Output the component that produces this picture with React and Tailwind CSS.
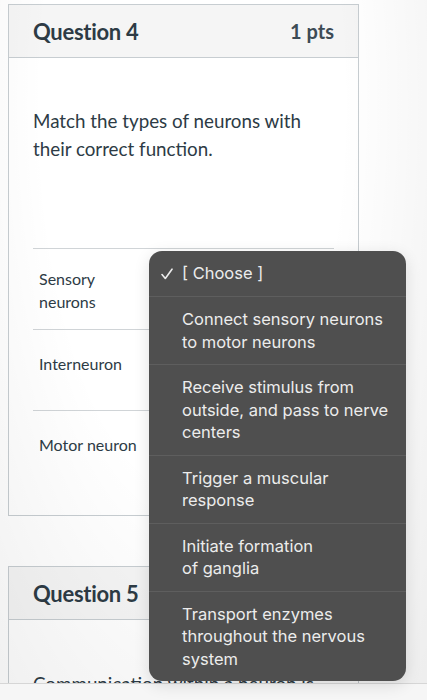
import React from "react";

const options = [
  ["Connect sensory neurons", "to motor neurons"],
  ["Receive stimulus from", "outside, and pass to nerve", "centers"],
  ["Trigger a muscular", "response"],
  ["Initiate formation", "of ganglia"],
  ["Transport enzymes", "throughout the nervous", "system"],
];

export default function App() {
  return (
    <div className="relative w-[427px] h-[700px] overflow-hidden bg-white font-['Lato','Liberation_Sans',sans-serif] text-[#2d3b45]">
      <div className="pt-[4px] pl-[8px]">
        {/* Card 1 */}
        <div className="w-[351px] border border-[#c7cdd1] bg-white">
          <div className="h-[53px] bg-[#f5f5f5] border-b border-[#c7cdd1] flex items-center justify-between pl-[24px] pr-[24px]">
            <span className="text-[22px] font-bold tracking-[-0.3px]">Question 4</span>
            <span className="text-[20px] font-bold text-[#3d4b55]">1 pts</span>
          </div>
          <div className="pl-[24px] pr-[24px] pt-[49px]">
            <p className="text-[18.8px] leading-[28px] text-[#2d3b45]">
              Match the types of neurons with
              <br />
              their correct function.
            </p>
            <div className="mt-[85px] border-t border-[#d0d4d7]">
              <div className="h-[81px] border-b border-[#d0d4d7] pt-[18px] pl-[6px]">
                <div className="w-[100px] text-[16px] leading-[23px]">Sensory neurons</div>
              </div>
              <div className="h-[81px] border-b border-[#d0d4d7] pt-[22px] pl-[6px]">
                <div className="text-[16px] leading-[23px]">Interneuron</div>
              </div>
              <div className="h-[104px] pt-[22px] pl-[6px]">
                <div className="text-[16px] leading-[23px]">Motor neuron</div>
              </div>
            </div>
          </div>
        </div>

        {/* Card 2 */}
        <div className="mt-[50px] w-[351px] border border-[#c7cdd1] bg-white">
          <div className="h-[53px] bg-[#f5f5f5] border-b border-[#c7cdd1] flex items-center pl-[24px]">
            <span className="text-[22px] font-bold tracking-[-0.3px]">Question 5</span>
          </div>
          <div className="pl-[24px] pt-[50px]">
            <p className="text-[18.8px] leading-[28px]">Communication within a neuron is</p>
          </div>
        </div>
      </div>

      {/* dim overlay */}
      <div className="pointer-events-none absolute inset-0 bg-[radial-gradient(ellipse_at_45%_15%,rgba(255,255,255,0)_45%,rgba(0,0,0,0.07)_100%)]" />

      {/* bottom bar */}
      <div className="absolute left-0 right-0 bottom-0 h-[17px] bg-[#f6f6f6] border-t border-[#d6d6d6]" />

      {/* dropdown */}
      <div className="absolute left-[149px] top-[251px] w-[257px] rounded-[13px] bg-[#4f4f4f] overflow-hidden font-['Inter','Liberation_Sans',sans-serif] text-[16.5px] leading-[22.5px] text-[#ececec] shadow-[0_4px_16px_rgba(0,0,0,0.12)]">
        <div className="h-[45px] flex items-center">
          <span className="w-[33px] pl-[12px] flex items-center">
            <svg width="12" height="12" viewBox="0 0 12 12" fill="none" stroke="#ececec" strokeWidth="1.6" strokeLinecap="round" strokeLinejoin="round">
              <path d="M1 6.5 L4.3 10.5 L11 1.2" />
            </svg>
          </span>
          <span>[ Choose ]</span>
        </div>
        {options.map((lines, i) => (
          <div key={i} className="border-t border-[#5e5e5e] py-[11px] pl-[33px] pr-[8px]">
            {lines.map((l, j) => (
              <div key={j}>{l}</div>
            ))}
          </div>
        ))}
      </div>
    </div>
  );
}
